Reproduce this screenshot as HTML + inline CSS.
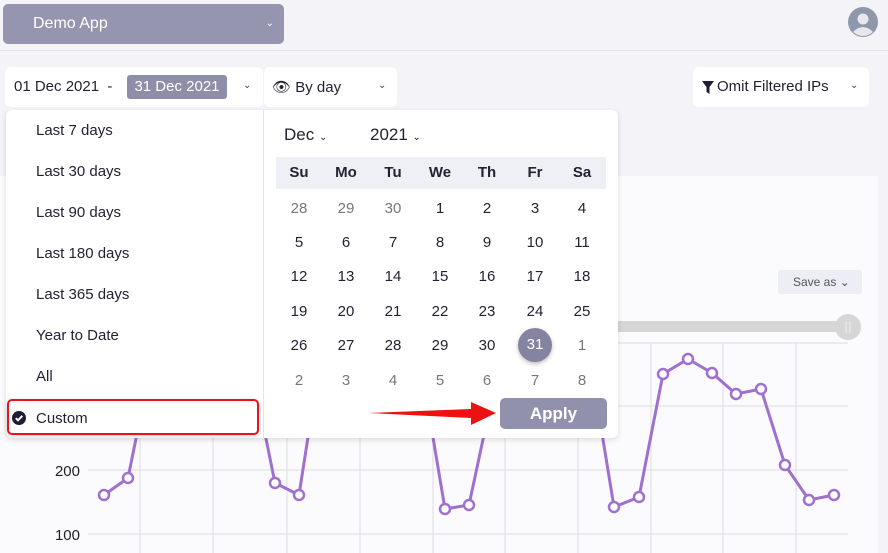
<!DOCTYPE html>
<html><head><style>
*{margin:0;padding:0;box-sizing:border-box}
body{width:888px;height:553px;overflow:hidden;background:#f3f3f8;font-family:"Liberation Sans",sans-serif;color:#222233;position:relative}
.a{position:absolute}
.box{background:#fff;border-radius:6px}
.chev{font-size:10px;color:#444}
.cal div{position:absolute;width:40px;text-align:center;font-size:15px}
</style></head><body>
<div class="a" style="left:0;top:50px;width:888px;height:1px;background:#e6e6ee"></div>
<div class="a" style="left:3px;top:4px;width:281px;height:40px;background:#9595b0;border-radius:5px;color:#fff;font-size:16px;line-height:40px;padding-left:30px">Demo App<span class="a" style="right:10px;top:0;font-size:10px">&#8964;</span></div>
<svg class="a" style="left:848px;top:7px" width="30" height="30"><circle cx="15" cy="15" r="15" fill="#8e97ab"/><circle cx="15" cy="12" r="5.5" fill="#e6e8ee"/><path d="M5 25 Q15 15 25 25 Q15 33 5 25Z" fill="#e6e8ee"/></svg>

<div class="a box" style="left:5px;top:67px;width:258px;height:40px"></div>
<div class="a" style="left:14px;top:78px;font-size:15px">01 Dec 2021 &nbsp;-</div>
<div class="a" style="left:127px;top:75px;width:100px;height:24px;background:#8e8ea8;border-radius:3px;color:#fff;font-size:15px;line-height:24px;text-align:center">31 Dec 2021</div>
<div class="a chev" style="left:243px;top:80px">&#8964;</div>
<div class="a box" style="left:264px;top:67px;width:133px;height:40px"></div>
<div class="a" style="left:272px;top:78px;font-size:15px">&#128065;&#xFE0E; By day</div>
<div class="a chev" style="left:378px;top:80px">&#8964;</div>
<div class="a box" style="left:693px;top:67px;width:176px;height:40px"></div>
<svg class="a" style="left:702px;top:81px" width="12" height="13"><path d="M0 0H12L7.5 6V13L4.5 11V6Z" fill="#1d1d33"/></svg>
<div class="a" style="left:717px;top:78px;font-size:15px">Omit Filtered IPs</div>
<div class="a chev" style="left:850px;top:80px">&#8964;</div>

<div class="a" style="left:0;top:176px;width:878px;height:377px;background:#fbfbfd"></div>
<div class="a" style="left:778px;top:270px;width:84px;height:24px;background:#ededf5;border-radius:3px;font-size:12px;color:#555;line-height:24px;padding-left:15px">Save as &#8964;</div>
<svg class="a" style="left:0;top:300px" width="878" height="253">
<rect x="600" y="21" width="248" height="11" fill="#d6d6d6"/>
<circle cx="848" cy="27" r="13" fill="#d6d6d6"/><line x1="846" y1="21" x2="846" y2="33" stroke="#eee"/><line x1="850" y1="21" x2="850" y2="33" stroke="#eee"/>
<g stroke="#dedee2" stroke-width="1">
<line x1="88" y1="43" x2="848" y2="43"/><line x1="88" y1="106" x2="848" y2="106"/><line x1="88" y1="170" x2="848" y2="170"/><line x1="88" y1="234" x2="848" y2="234"/>
<line x1="140" y1="43" x2="140" y2="253"/><line x1="213" y1="43" x2="213" y2="253"/><line x1="287" y1="43" x2="287" y2="253"/><line x1="360" y1="43" x2="360" y2="253"/><line x1="433" y1="43" x2="433" y2="253"/><line x1="505" y1="43" x2="505" y2="253"/><line x1="578" y1="43" x2="578" y2="253"/><line x1="651" y1="43" x2="651" y2="253"/><line x1="723" y1="43" x2="723" y2="253"/><line x1="796" y1="43" x2="796" y2="253"/>
</g>
<text x="80" y="176" font-size="15" text-anchor="end" fill="#222">200</text>
<text x="80" y="240" font-size="15" text-anchor="end" fill="#222">100</text>
<polyline fill="none" stroke="#a070d0" stroke-width="3" points="104,195 128,178 152,60 250,60 275,183 299,195 320,60 420,60 445,209 469,205 500,60 590,60 614,207 639,197 663,74 688,59 712,73 736,94 761,89 785,165 809,200 834,195"/>
<g fill="#fff" stroke="#a070d0" stroke-width="2.5">
<circle cx="104" cy="195" r="5"/><circle cx="128" cy="178" r="5"/><circle cx="275" cy="183" r="5"/><circle cx="299" cy="195" r="5"/><circle cx="445" cy="209" r="5"/><circle cx="469" cy="205" r="5"/><circle cx="614" cy="207" r="5"/><circle cx="639" cy="197" r="5"/><circle cx="663" cy="74" r="5"/><circle cx="688" cy="59" r="5"/><circle cx="712" cy="73" r="5"/><circle cx="736" cy="94" r="5"/><circle cx="761" cy="89" r="5"/><circle cx="785" cy="165" r="5"/><circle cx="809" cy="200" r="5"/><circle cx="834" cy="195" r="5"/>
</g>
</svg>

<div class="a" style="left:6px;top:110px;width:612px;height:328px;background:#fff;border-radius:6px;box-shadow:0 2px 6px rgba(0,0,0,.12)"></div>
<div class="a" style="left:263px;top:110px;width:1px;height:328px;background:#e4e4ea"></div>
<div class="a" style="left:36px;top:110px;font-size:15px;line-height:41px">Last 7 days<br>Last 30 days<br>Last 90 days<br>Last 180 days<br>Last 365 days<br>Year to Date<br>All</div>
<div class="a" style="left:7px;top:399px;width:252px;height:36px;border:2px solid #e8141c;border-radius:5px;box-shadow:0 1px 4px rgba(0,0,0,.2)"></div>
<svg class="a" style="left:12px;top:411px" width="14" height="14"><circle cx="7" cy="7" r="7" fill="#1d1d33"/><path d="M3.8 7.2L6 9.3L10.3 4.8" stroke="#fff" stroke-width="2" fill="none"/></svg>
<div class="a" style="left:36px;top:410px;font-size:15px">Custom</div>

<div class="a" style="left:284px;top:125px;font-size:17px">Dec <span style="font-size:10px">&#8964;</span></div>
<div class="a" style="left:370px;top:125px;font-size:17px">2021 <span style="font-size:10px">&#8964;</span></div>
<div class="a" style="left:276px;top:157px;width:330px;height:32px;background:#eef0f6"></div>
<div class="cal">
<div style="left:279px;top:164px;font-weight:bold">Su</div><div style="left:326px;top:164px;font-weight:bold">Mo</div><div style="left:373px;top:164px;font-weight:bold">Tu</div><div style="left:420px;top:164px;font-weight:bold">We</div><div style="left:467px;top:164px;font-weight:bold">Th</div><div style="left:515px;top:164px;font-weight:bold">Fr</div><div style="left:562px;top:164px;font-weight:bold">Sa</div>
<div style="left:279px;top:200px;color:#777">28</div><div style="left:326px;top:200px;color:#777">29</div><div style="left:373px;top:200px;color:#777">30</div><div style="left:420px;top:200px">1</div><div style="left:467px;top:200px">2</div><div style="left:515px;top:200px">3</div><div style="left:562px;top:200px">4</div>
<div style="left:279px;top:234px">5</div><div style="left:326px;top:234px">6</div><div style="left:373px;top:234px">7</div><div style="left:420px;top:234px">8</div><div style="left:467px;top:234px">9</div><div style="left:515px;top:234px">10</div><div style="left:562px;top:234px">11</div>
<div style="left:279px;top:268px">12</div><div style="left:326px;top:268px">13</div><div style="left:373px;top:268px">14</div><div style="left:420px;top:268px">15</div><div style="left:467px;top:268px">16</div><div style="left:515px;top:268px">17</div><div style="left:562px;top:268px">18</div>
<div style="left:279px;top:303px">19</div><div style="left:326px;top:303px">20</div><div style="left:373px;top:303px">21</div><div style="left:420px;top:303px">22</div><div style="left:467px;top:303px">23</div><div style="left:515px;top:303px">24</div><div style="left:562px;top:303px">25</div>
<div style="left:279px;top:337px">26</div><div style="left:326px;top:337px">27</div><div style="left:373px;top:337px">28</div><div style="left:420px;top:337px">29</div><div style="left:467px;top:337px">30</div>
<div style="left:518px;top:328px;width:34px;height:34px;border-radius:17px;background:#8484a0;color:#fff;line-height:34px;box-shadow:0 2px 4px rgba(0,0,0,.25)">31</div>
<div style="left:562px;top:337px;color:#777">1</div>
<div style="left:279px;top:372px;color:#777">2</div><div style="left:326px;top:372px;color:#777">3</div><div style="left:373px;top:372px;color:#777">4</div><div style="left:420px;top:372px;color:#777">5</div><div style="left:467px;top:372px;color:#777">6</div><div style="left:515px;top:372px;color:#777">7</div><div style="left:562px;top:372px;color:#777">8</div>
</div>
<div class="a" style="left:500px;top:398px;width:107px;height:31px;background:#9191ad;border-radius:5px;color:#fff;font-size:17px;font-weight:bold;text-align:center;line-height:31px">Apply</div>
<svg class="a" style="left:366px;top:400px" width="132" height="28"><path d="M2 13L105 9V2L130 13L105 25V18Z" fill="#ee1111"/></svg>
</body></html>
